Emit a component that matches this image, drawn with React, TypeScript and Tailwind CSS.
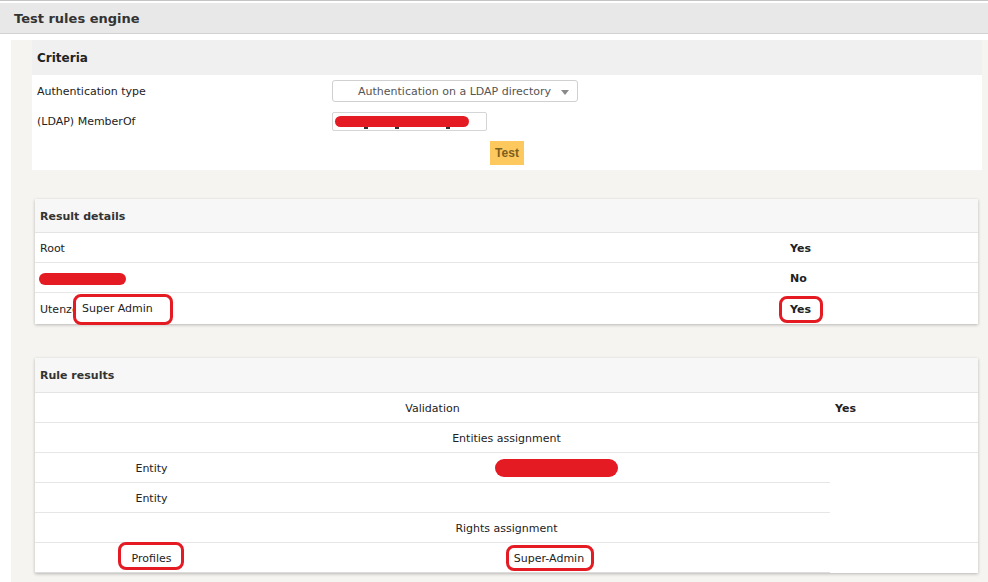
import React from "react";

const RED = "bg-[#e41b23]";

function Box({ className }: { className: string }) {
  return <div className={`absolute border-[3px] border-[#e41b23] rounded-[8px] ${className}`} />;
}

export default function App() {
  return (
    <div className="w-[988px] h-[582px] overflow-hidden bg-white font-['DejaVu_Sans',Verdana,sans-serif] text-[11px] text-[#222]">
      <div className="h-px bg-[#c4c4c4]" />
      <div className="mt-[2px] h-[31px] bg-[#e8e8e8] border-b border-[#d2d2d2] flex items-center pl-[14px] pt-[2px] text-[13px] font-bold text-[#333]">
        Test rules engine
      </div>
      <div className="mt-[6px] ml-[11px] h-[542px] bg-[#f5f4f0] flex flex-col">
        {/* Criteria */}
        <div className="ml-[21px] mr-[6px] bg-white">
          <div className="h-[35px] bg-[#f0f0f0] flex items-center pl-[5px] pt-[1px] text-[12px] font-bold text-[#222]">
            Criteria
          </div>
          <div className="pt-[5px] pb-[5px] flex flex-col">
            <div className="flex items-center h-[22px]">
              <div className="w-[300px] pl-[5px] pt-[2px]">Authentication type</div>
              <div className="w-[246px] h-[22px] border border-[#d0d0d0] rounded-[3px] flex items-center pl-[25px] pr-[8px] pt-[2px] text-[#555]">
                <span className="flex-1">Authentication on a LDAP directory</span>
                <svg width="8" height="5" viewBox="0 0 8 5">
                  <path d="M0 0 L8 0 L4 5 Z" fill="#8a8a8a" />
                </svg>
              </div>
            </div>
            <div className="flex items-center h-[19px] mt-[10px]">
              <div className="w-[300px] pl-[5px] pt-[2px]">(LDAP) MemberOf</div>
              <div className="relative w-[155px] h-[19px] border border-[#d5d5d5] rounded-[2px] flex items-center">
                <div className={`ml-[2px] w-[134px] h-[11px] rounded-full ${RED}`} />
                <div className="absolute left-[31px] top-[14px] w-[4px] h-[2px] bg-[#333]" />
                <div className="absolute left-[62px] top-[14px] w-[4px] h-[2px] bg-[#333]" />
                <div className="absolute left-[113px] top-[14px] w-[4px] h-[2px] bg-[#333]" />
              </div>
            </div>
            <div className="flex justify-center mt-[10px]">
              <div className="w-[34px] h-[24px] bg-[#fdc85e] flex items-center justify-center font-['Liberation_Sans_Narrow','Liberation_Sans',sans-serif] text-[12px] font-bold text-[#7d5f1e]">
                Test
              </div>
            </div>
          </div>
        </div>

        {/* Result details */}
        <div className="mt-[29px] ml-[24px] mr-[10px] bg-white shadow-[0_1px_3px_rgba(0,0,0,0.25)]">
          <div className="h-[34px] bg-[#f7f7f7] border-b border-[#e4e4e4] flex items-center pl-[5px] pt-[3px] font-bold text-[#333]">
            Result details
          </div>
          <div className="h-[30px] border-b border-[#e6e6e6] flex items-center pt-[3px]">
            <div className="w-[750px] pl-[5px]">Root</div>
            <div className="pl-[5px] font-bold">Yes</div>
          </div>
          <div className="h-[30px] border-b border-[#e6e6e6] flex items-center pt-[3px]">
            <div className="w-[750px] pl-[4px]">
              <div className={`w-[87px] h-[12px] rounded-full ${RED}`} />
            </div>
            <div className="pl-[5px] font-bold">No</div>
          </div>
          <div className="h-[31px] flex items-center relative">
            <div className="w-[750px] pl-[5px] pt-[3px] relative h-full flex items-center">
              Utenze
              <div className="absolute left-[38px] top-[1px] w-[100px] h-[31px] border-[3px] border-[#e41b23] rounded-[8px] bg-white flex items-center pl-[6px]">
                Super Admin
              </div>
            </div>
            <div className="pl-[5px] pt-[3px] font-bold relative h-full flex items-center">
              Yes
              <Box className="left-[-6px] top-[3px] w-[44px] h-[27px] rounded-[7px]" />
            </div>
          </div>
        </div>

        {/* Rule results */}
        <div className="mt-[34px] ml-[24px] mr-[10px] bg-white shadow-[0_1px_3px_rgba(0,0,0,0.25)]">
          <div className="h-[35px] bg-[#f7f7f7] border-b border-[#e4e4e4] flex items-center pl-[5px] pt-[3px] font-bold text-[#333]">
            Rule results
          </div>
          <div className="h-[30px] border-b border-[#e6e6e6] flex items-center pt-[3px]">
            <div className="w-[795px] text-center">Validation</div>
            <div className="pl-[5px] font-bold">Yes</div>
          </div>
          <div className="h-[30px] border-b border-[#e6e6e6] flex items-center justify-center pt-[3px]">
            Entities assignment
          </div>
          <div className="w-[795px]">
            <div className="h-[30px] border-b border-[#e6e6e6] flex items-center pt-[3px]">
              <div className="w-[233px] text-center">Entity</div>
              <div className="flex-1 flex justify-center">
                <div className={`ml-[14px] mb-[3px] w-[123px] h-[18px] rounded-full ${RED}`} />
              </div>
            </div>
            <div className="h-[30px] border-b border-[#e6e6e6] flex items-center pt-[3px]">
              <div className="w-[233px] text-center">Entity</div>
              <div className="flex-1" />
            </div>
          </div>
          <div className="h-[30px] border-b border-[#e6e6e6] flex items-center justify-center pt-[3px]">
            Rights assignment
          </div>
          <div className="w-[795px] h-[30px] border-b border-[#dcdcdc] flex items-center">
            <div className="w-[233px] h-full flex items-center justify-center pt-[3px] relative">
              Profiles
              <Box className="left-[83px] top-[-1px] w-[66px] h-[28px]" />
            </div>
            <div className="flex-1 h-full flex items-center justify-center pt-[3px] relative">
              Super-Admin
              <Box className="left-[238px] top-[2px] w-[88px] h-[26px]" />
            </div>
          </div>
        </div>
      </div>
    </div>
  );
}
